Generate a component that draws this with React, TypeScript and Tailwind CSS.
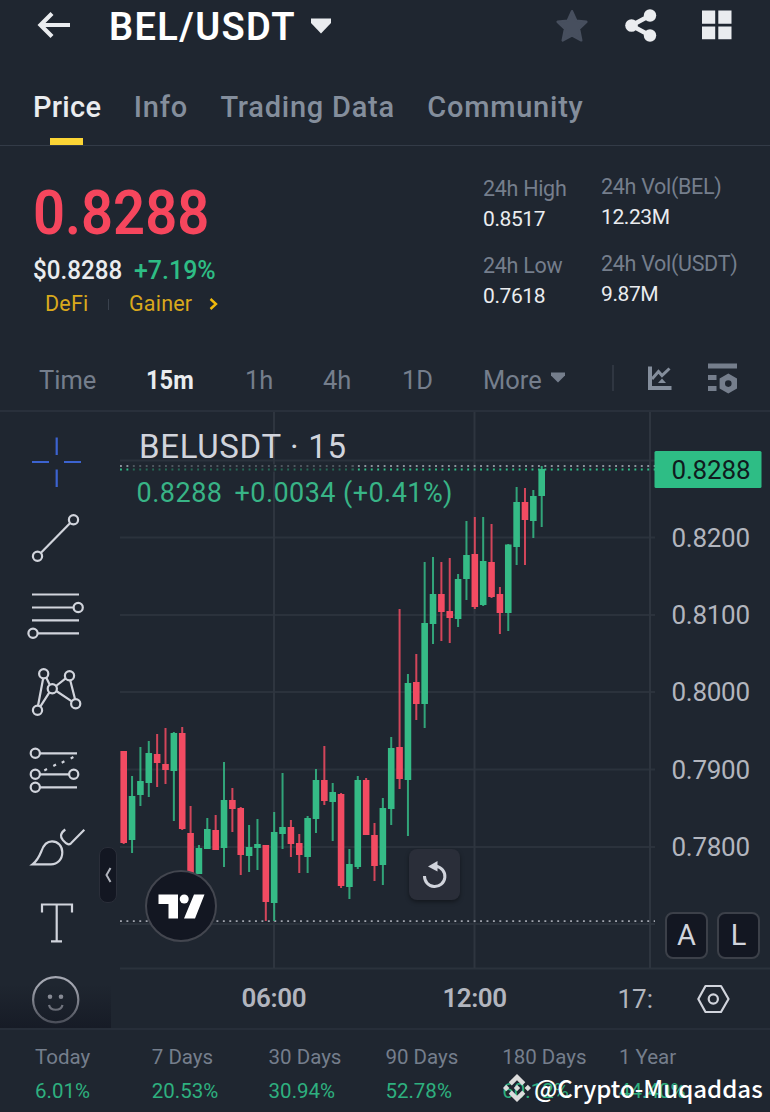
import type { ReactNode } from 'react';

type Candle = [up: number, wickTop: number, bodyTop: number, bodyBottom: number, wickBottom: number];

const tabs = ['Price', 'Info', 'Trading Data', 'Community'];

const performance = [
  { label: 'Today', value: '6.01%' },
  { label: '7 Days', value: '20.53%' },
  { label: '30 Days', value: '30.94%' },
  { label: '90 Days', value: '52.78%' },
  { label: '180 Days', value: '60.12%' },
  { label: '1 Year', value: '44.40%' },
];

const candles: Candle[] = [
  [0, 751, 751, 843, 844],
  [1, 776, 796, 840, 853],
  [1, 747, 781, 795, 806],
  [1, 741, 753, 783, 797],
  [0, 734, 754, 763, 787],
  [0, 728, 764, 770, 784],
  [1, 732, 733, 771, 821],
  [0, 727, 733, 829, 830],
  [0, 806, 833, 874, 874],
  [1, 845, 848, 874, 874],
  [1, 818, 829, 849, 849],
  [0, 815, 830, 850, 850],
  [1, 762, 800, 848, 867],
  [0, 788, 800, 809, 832],
  [0, 807, 808, 855, 875],
  [1, 825, 847, 856, 872],
  [1, 819, 844, 848, 870],
  [0, 845, 845, 902, 921],
  [1, 812, 832, 903, 921],
  [1, 773, 827, 834, 849],
  [0, 820, 827, 844, 857],
  [0, 834, 843, 855, 873],
  [1, 816, 818, 857, 873],
  [1, 769, 780, 819, 833],
  [0, 746, 780, 801, 805],
  [1, 783, 792, 802, 841],
  [0, 793, 794, 886, 888],
  [1, 849, 864, 887, 899],
  [1, 776, 780, 867, 869],
  [0, 778, 780, 835, 835],
  [0, 823, 835, 866, 881],
  [1, 798, 808, 865, 885],
  [1, 737, 748, 809, 825],
  [0, 609, 747, 779, 789],
  [1, 674, 683, 780, 836],
  [0, 654, 682, 704, 720],
  [1, 562, 623, 704, 728],
  [1, 557, 594, 624, 644],
  [0, 562, 594, 612, 641],
  [0, 558, 611, 618, 643],
  [1, 574, 579, 619, 627],
  [1, 521, 555, 579, 600],
  [0, 517, 554, 607, 609],
  [1, 517, 561, 605, 606],
  [0, 524, 562, 597, 598],
  [0, 587, 594, 613, 634],
  [1, 544, 544.5, 613, 631],
  [1, 487, 502, 547, 565],
  [0, 488, 502, 520, 565],
  [1, 490, 496, 521, 538],
  [1, 466, 469, 496, 527],
];

const priceLabels = [
  { y: 537.5, text: '0.8200' },
  { y: 614.5, text: '0.8100' },
  { y: 692, text: '0.8000' },
  { y: 769.5, text: '0.7900' },
  { y: 846.5, text: '0.7800' },
];

const Header = () => (
  <header className="flex h-[53px] items-center pl-[37px] pr-[38px]">
    <svg width="34" height="28" viewBox="0 0 34 28" fill="none" stroke="#eaecef" strokeWidth="4.2" className="mb-[3px]">
      <path d="M33 14H3.5M15 2.5L3.5 14L15 25.5" />
    </svg>
    <h1 className="ml-[38px] w-[199px] pt-[2px] text-[38px] leading-[51px] font-semibold tracking-[1.4px] whitespace-nowrap text-white">BEL/USDT</h1>
    <svg width="20" height="16" viewBox="0 0 20 16" fill="#eaecef" className="ml-[3px] mb-px">
      <path d="M0 0.5H20V5L10 15.5L0 5Z" />
    </svg>
    <div className="ml-auto flex items-center">
      <svg width="34" height="34" viewBox="0 0 34 34" fill="#474f5e" stroke="#474f5e" strokeWidth="2.4" strokeLinejoin="round" className="mb-[2px]">
        <path d="M17 2.2L21.2 11.6L31.4 12.8L24 19.8L26.3 31.4L17 26.4L7.7 31.4L10 19.8L2.6 12.8L12.8 11.6Z" />
      </svg>
      <svg width="32" height="33" viewBox="0 0 32 33" fill="#eaecef" className="ml-[36px] mb-[3px]">
        <path d="M6.5 16.5L25 6.5M6.5 16.5L25 26.5" stroke="#eaecef" strokeWidth="4.4" />
        <circle cx="6.5" cy="16.5" r="6.3" />
        <circle cx="25" cy="6.5" r="6.2" />
        <circle cx="25" cy="26.5" r="6.2" />
      </svg>
      <svg width="30" height="30" viewBox="0 0 30 30" fill="#eaecef" className="ml-[45px] mb-[3px]">
        <path d="M0 0.5H13.2V13.7H0ZM16.3 0.5H29.5V13.7H16.3ZM0 16.6H13.2V29.3H0ZM16.3 16.6H29.5V29.3H16.3Z" />
      </svg>
    </div>
  </header>
);

const Tabs = () => (
  <nav className="flex h-[93px] gap-[32.5px] border-b border-[#333b47] pl-[33px] pt-[37px] text-[29px] leading-[34px] font-medium tracking-[0.75px] text-[#848e9c]">
    {tabs.map((tab, i) => (
      <div key={tab} className={i === 0 ? 'relative tracking-[0.3px] text-[#eaecef]' : ''}>
        {tab}
        {i === 0 && <span className="absolute left-[17px] top-[48px] h-[7px] w-[33px] bg-[#fcd535]" />}
      </div>
    ))}
  </nav>
);

const Stat = ({ label, value }: { label: string; value: string }) => (
  <div className="h-[77px] whitespace-nowrap">
    <p className="text-[21.5px] leading-[30px] tracking-[-0.3px] text-[#757e8c]">{label}</p>
    <p className="text-[21px] leading-[30px] tracking-[-0.4px] text-[#eaecef]">{value}</p>
  </div>
);

const PriceSummary = () => (
  <section className="flex h-[204px]">
    <div className="w-[483px] pl-[33px] pt-[36px]">
      <p className="origin-left scale-x-[0.92] text-[61px] leading-[62px] font-semibold text-[#f6465d]">0.8288</p>
      <div className="mt-[8px] flex h-[36px] text-[26px] leading-[36px] font-medium">
        <span className="w-[101px] origin-left scale-x-[0.93] text-[#eaecef]">$0.8288</span>
        <span className="origin-left scale-x-[0.96] text-[#2ebd85]">+7.19%</span>
      </div>
      <div className="mt-px flex h-[30px] items-center text-[21.5px] tracking-[0.2px] text-[#d9a91c]">
        <span className="ml-[12px] w-[63px]">DeFi</span>
        <span className="h-[11px] w-px bg-[#3a424e]" />
        <span className="ml-[20px]">Gainer</span>
        <svg width="9" height="12" viewBox="0 0 9 12" fill="none" stroke="#f0b90b" strokeWidth="2.4" className="ml-[17px]">
          <path d="M1.5 1L7 6L1.5 11" />
        </svg>
      </div>
    </div>
    <div className="w-[118px] pt-[28px]">
      <Stat label="24h High" value="0.8517" />
      <Stat label="24h Low" value="0.7618" />
    </div>
    <div className="pt-[26px]">
      <Stat label="24h Vol(BEL)" value="12.23M" />
      <Stat label="24h Vol(USDT)" value="9.87M" />
    </div>
  </section>
);

const Intervals = () => (
  <section className="flex h-[62px] items-center border-b-2 border-[#29303b] pl-[39px] text-[25.5px] text-[#757e8c]">
    <span className="w-[107px]">Time</span>
    <span className="w-[99px] origin-left scale-x-[0.93] font-bold text-[#eaecef]">15m</span>
    <span className="w-[78px]">1h</span>
    <span className="w-[79px]">4h</span>
    <span className="w-[81px]">1D</span>
    <span>More</span>
    <svg width="14" height="11" viewBox="0 0 14 11" fill="#757e8c" className="ml-[9px] mb-[5px]">
      <path d="M0 0.5H14V3.5L7 10.5L0 3.5Z" />
    </svg>
    <span className="ml-[47px] mb-[4px] h-[26px] w-[2px] bg-[#2f3641]" />
    <svg width="24" height="24" viewBox="0 0 24 24" fill="none" stroke="#848e9c" className="ml-[34px] mb-[5px]">
      <path d="M2 0.5V22H23.5" strokeWidth="4" />
      <path d="M4 13L10.5 5.5L14 9.5L21.5 2.5" strokeWidth="3" />
      <path d="M10 17L14 12.5L18 17Z" fill="#848e9c" stroke="none" />
    </svg>
    <svg width="30" height="31" viewBox="0 0 30 31" fill="#757e8c" className="ml-[36px] mb-[4px]">
      <path d="M0 0.5H29V5.5H0ZM0 12H8.5V17H0ZM0 23H8.5V28H0Z" />
      <path fillRule="evenodd" d="M20.3 10.5L29 15.5V25.5L20.3 30.5L11.6 25.5V15.5ZM20.3 17.3A3.3 3.3 0 1 0 20.3 23.9A3.3 3.3 0 1 0 20.3 17.3Z" />
    </svg>
  </section>
);

const Tool = ({ children, stroke = '#d1d4dc' }: { children: ReactNode; stroke?: string }) => (
  <svg width="112" height="77" viewBox="0 0 112 77" fill="none" stroke={stroke} strokeWidth="2.2" className="shrink-0">
    {children}
  </svg>
);

const DrawingTools = () => (
  <aside className="relative flex h-[616px] w-[112px] shrink-0 flex-col overflow-hidden pt-[12px]">
    <Tool stroke="#3c63d0">
      <path d="M56.7 13.5V31M56.7 45.5V63M32 38H49M64 38H81" />
    </Tool>
    <Tool>
      <path d="M41 51.8L70.2 22" />
      <circle cx="73.5" cy="18.7" r="4.6" />
      <circle cx="37.5" cy="55.2" r="4.6" />
    </Tool>
    <Tool>
      <path d="M32 16.5H79M32 29.5H73.5M32 42.3H79M38 55.3H79" />
      <circle cx="78.2" cy="29.5" r="4.6" />
      <circle cx="33" cy="55.3" r="4.6" />
    </Tool>
    <Tool>
      <path d="M43.2 23.3L38 50.7M46.2 22.6L49.7 29.8M49.4 37.3L40.3 51.6M56 31L65.7 23.3M56.3 36L71.8 46.3M70.2 25.3L75 44.1" />
      <circle cx="43.7" cy="18.7" r="4.6" />
      <circle cx="69.5" cy="20.7" r="4.6" />
      <circle cx="52.3" cy="33.7" r="4.6" />
      <circle cx="75.7" cy="48.7" r="4.6" />
      <circle cx="37.5" cy="55.3" r="4.6" />
    </Tool>
    <Tool>
      <path d="M40 21.3H77M40 42.3H69M40 55.3H77" />
      <path d="M44.3 38.4L47 37M53.3 34L56 32.6M61.7 30.7L64.4 29.3M70.7 26.4L73.4 25" />
      <circle cx="35.3" cy="21.3" r="4.6" />
      <circle cx="35.3" cy="42.3" r="4.6" />
      <circle cx="73.7" cy="42.3" r="4.6" />
      <circle cx="35.3" cy="55.3" r="4.6" />
    </Tool>
    <Tool>
      <path d="M32.5 55.4C37 52 39.5 47 41.5 42C43.5 36 47 32.3 52 32.3C58 32.3 62.3 37 62.3 43.3C62.3 50.5 57.5 55.4 51 55.4Z" />
      <path d="M65.3 20.5C60 24.3 60 28 63 31.3L66 34.2C67.7 35.6 69.5 35.6 71 34.3L84.3 20.7" />
    </Tool>
    <Tool>
      <path d="M42 26.5V18.5H72V26.5M56.7 18.5V55.3M51 55.3H62" />
    </Tool>
    <Tool stroke="#a4a7b1">
      <circle cx="55.7" cy="36.7" r="22.6" />
      <circle cx="50" cy="33.7" r="1.2" fill="#a4a7b1" />
      <circle cx="61" cy="33.7" r="1.2" fill="#a4a7b1" />
      <path d="M49 42C50.5 48.3 61 48.3 62.5 42" />
    </Tool>
    <div className="absolute bottom-0 left-0 h-[44px] w-[111px] bg-linear-to-b from-transparent to-[#131722]/70" />
  </aside>
);

const Chart = () => (
  <div className="relative h-[616px] w-[658px]">
    <svg width="658" height="616" viewBox="112 412 658 616">
      <path d="M120 460.5H655M120 537.5H655M120 615H655M120 692H655M120 769.5H655M120 847H655M120 924H655M120 968.5H770" stroke="#2b323c" strokeWidth="2" />
      <path d="M274 412V968M474.5 412V968M650 412V968" stroke="#2e353f" strokeWidth="2" />

      <path d="M120 466H655" stroke="#8d929c" strokeWidth="1.8" strokeDasharray="1.9 4.53" />
      <path d="M120 469.5H655" stroke="#2ebd85" strokeWidth="1.8" strokeDasharray="1.9 4.53" />
      <rect x="131" y="464" width="222" height="8" fill="#1f2630" opacity="0.55" />
      <path d="M120 921.2H655" stroke="#a0a4ad" strokeWidth="1.8" strokeDasharray="1.9 4.53" />

      {candles.map(([up, wickTop, bodyTop, bodyBottom, wickBottom], i) => {
        const x = 123.7 + i * 8.36;
        const color = up ? '#35bb86' : '#f24b62';
        return (
          <g key={i} fill={color}>
            <rect x={x - 1} y={wickTop} width="2" height={wickBottom - wickTop} opacity="0.85" />
            <rect x={x - 3.3} y={bodyTop} width="6.6" height={bodyBottom - bodyTop} />
          </g>
        );
      })}

      <g fontFamily="Roboto, sans-serif" fill="#b2b5be" fontSize="26">
        <text x="139" y="458" fontSize="33" fill="#d1d4dc" textLength="207">BELUSDT · 15</text>
        <text x="136.5" y="502" fontSize="27" fill="#38b486" textLength="85.5">0.8288</text>
        <text x="234.5" y="502" fontSize="27" fill="#38b486" textLength="218">+0.0034 (+0.41%)</text>
        {priceLabels.map((label) => (
          <text key={label.text} x="671.5" y={label.y + 9} textLength="78.5">{label.text}</text>
        ))}
        <text x="241.5" y="1007" fontWeight="600" textLength="65">06:00</text>
        <text x="442.5" y="1007" fontWeight="600" textLength="64.5">12:00</text>
        <text x="617.5" y="1007.5">17:</text>
      </g>

      <rect x="654.5" y="451" width="107" height="37" rx="1.5" fill="#2ebd85" />
      <text x="671.5" y="479" fontFamily="Roboto, sans-serif" fontSize="26" fill="#101b1e" textLength="79">0.8288</text>

      <g fill="none" stroke="#d1d4dc" strokeWidth="2.2">
        <path d="M705.5 986H721L728.5 999L721 1012H705.5L698.3 999Z" strokeLinejoin="round" />
        <circle cx="713.3" cy="999" r="4.6" />
      </g>
    </svg>

    {/* TradingView badge */}
    <div className="absolute left-[33px] top-[458px] flex size-[72px] items-center justify-center rounded-full border-2 border-[#43464f] bg-[#131722]">
      <svg width="47" height="25" viewBox="0 0 47 25" fill="#ffffff">
        <path d="M0.5 0.5H20V24.5H10.5V10H0.5ZM36 0.5H46.5L37 24.5H26Z" />
        <circle cx="26.2" cy="5" r="4.5" />
      </svg>
    </div>

    <button className="absolute left-[297px] top-[437px] flex size-[51px] items-center justify-center rounded-[8px] bg-[#2a2e39] shadow-[0_2px_4px_rgba(0,0,0,0.4)]">
      <svg width="26" height="28" viewBox="0 0 26 28" fill="none" stroke="#d1d4dc" strokeWidth="3">
        <path d="M2.5 15A10.2 10.2 0 1 0 14 5.200" />
        <path d="M6 5.5L15.5 0V10.500Z" fill="#d1d4dc" stroke="none" />
      </svg>
    </button>

    <div className="absolute left-[553px] top-[500px] flex gap-[9px] text-[29px] text-[#d1d4dc]">
      <button className="h-[47px] w-[43px] rounded-[8px] border-2 border-[#3c4049] bg-[#131722] leading-none">A</button>
      <button className="h-[47px] w-[43px] rounded-[8px] border-2 border-[#3c4049] bg-[#131722] leading-none">L</button>
    </div>

    {/* sidebar collapse handle */}
    <div className="absolute left-[-13px] top-[435px] flex h-[56px] w-[18px] items-center justify-center rounded-[8px] border border-[#2a2e39] bg-[#131722]">
      <svg width="7" height="16" viewBox="0 0 7 16" fill="none" stroke="#b2b5be" strokeWidth="2">
        <path d="M5.5 1L1.5 8L5.5 15" />
      </svg>
    </div>
  </div>
);

const Performance = () => (
  <footer className="relative h-[84px] border-t-2 border-[#272e39] pl-[35px] pt-[12px]">
    <div className="flex">
      {performance.map((item) => (
        <div key={item.label} className="w-[116.8px] shrink-0 text-[20.5px] whitespace-nowrap">
          <p className="leading-[30px] text-[#757e8c]">{item.label}</p>
          <p className="mt-[4px] leading-[30px] text-[#2eb07f]">{item.value}</p>
        </div>
      ))}
    </div>
    <div className="absolute left-[503px] top-[42px] flex h-[32px] items-center">
      <svg width="28" height="28" viewBox="0 0 28 28" fill="#dcdcdc">
        <path d="M14 0L22.3 8.3L19.2 11.4L14 6.2L8.8 11.4L5.7 8.3ZM14 28L22.3 19.7L19.2 16.6L14 21.8L8.8 16.6L5.7 19.7ZM14 10.8L17.2 14L14 17.2L10.8 14ZM3.2 10.8L6.4 14L3.2 17.2L0 14ZM24.8 10.8L28 14L24.8 17.2L21.6 14Z" />
      </svg>
      <span className="ml-[3px] font-['Noto_Sans_CJK_SC',sans-serif] text-[24px] font-medium whitespace-nowrap text-white">@Crypto-Muqaddas</span>
    </div>
  </footer>
);

export default function App() {
  return (
    <div className="h-[1112px] w-[770px] overflow-hidden bg-[#1f2630] font-[Roboto,sans-serif]">
      <Header />
      <Tabs />
      <PriceSummary />
      <Intervals />
      <main className="flex">
        <DrawingTools />
        <Chart />
      </main>
      <Performance />
    </div>
  );
}
